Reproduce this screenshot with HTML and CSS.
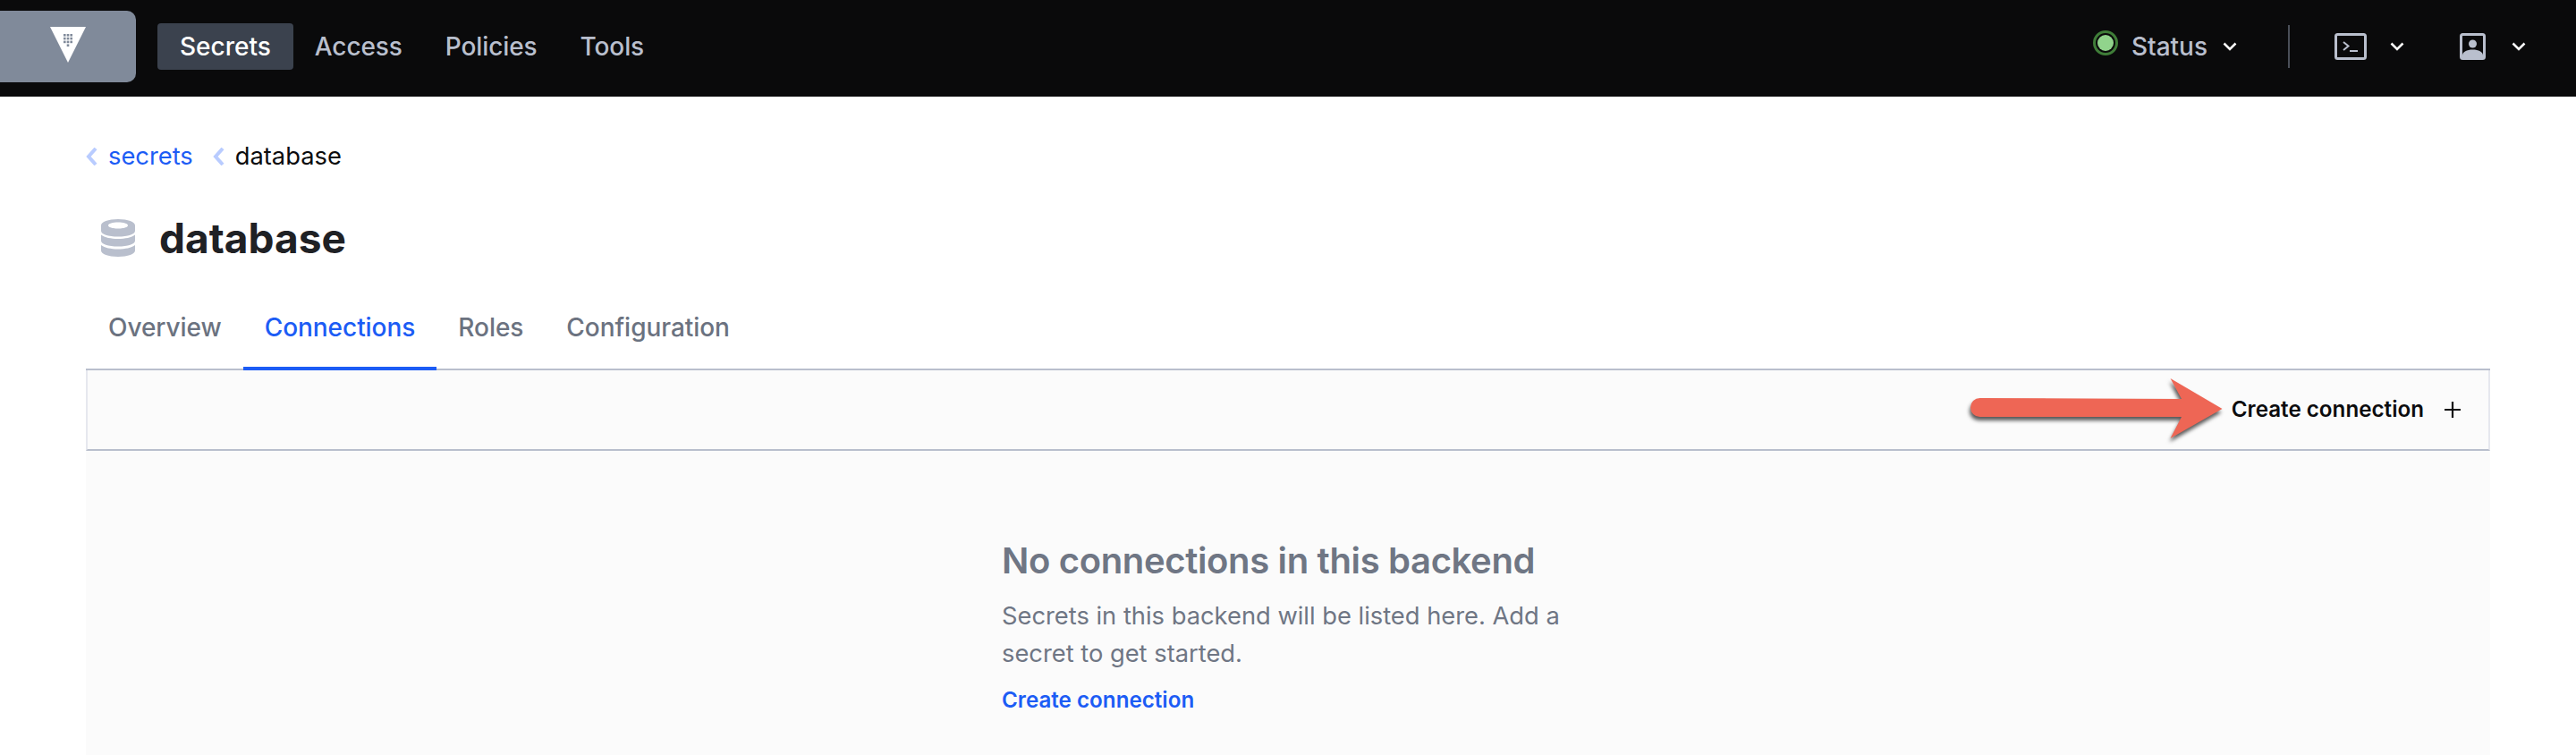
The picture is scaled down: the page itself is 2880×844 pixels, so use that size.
FILE: index.html
```html
<!DOCTYPE html>
<html lang="en">

<head>
  <meta charset="UTF-8" />
  <title>database - Secrets</title>
  <link rel="stylesheet" href="styles.css">
</head>

<body>

  <nav class="topbar">
    <a class="logo" href="#">
      <svg width="40" height="40" viewBox="0 0 40 40">
        <path d="M0 0H40L20 40Z" fill="#fff" />
        <g fill="#808a9a">
          <rect x="15" y="8" width="2.6" height="2.6" />
          <rect x="18.7" y="8" width="2.6" height="2.6" />
          <rect x="22.4" y="8" width="2.6" height="2.6" />
          <rect x="15" y="11.8" width="2.6" height="2.6" />
          <rect x="18.7" y="11.8" width="2.6" height="2.6" />
          <rect x="22.4" y="11.8" width="2.6" height="2.6" />
          <rect x="15" y="15.6" width="2.6" height="2.6" />
          <rect x="18.7" y="15.6" width="2.6" height="2.6" />
          <rect x="22.4" y="15.6" width="2.6" height="2.6" />
          <rect x="18.7" y="19.4" width="2.6" height="2.6" />
        </g>
      </svg>
    </a>

    <div class="nav-links">
      <a class="nav-link active" href="#">Secrets</a>
      <a class="nav-link" href="#">Access</a>
      <a class="nav-link" href="#">Policies</a>
      <a class="nav-link" href="#">Tools</a>
    </div>

    <div class="nav-right">
      <svg class="status-dot" width="28" height="28" viewBox="0 0 28 28">
        <circle cx="14" cy="14" r="12.5" fill="none" stroke="#3f7d38" stroke-width="3" />
        <circle cx="14" cy="14" r="9" fill="#91d48c" />
      </svg>
      <span class="status-label">Status</span>
      <svg class="chevron" width="16" height="10" viewBox="0 0 16 10">
        <path d="M1.5 1.5L8 8L14.500 1.500" />
      </svg>
      <span class="nav-divider"></span>
      <svg class="terminal-icon" width="36" height="30" viewBox="0 0 36 30">
        <rect x="1.500" y="1.500" width="33" height="27" rx="2" fill="none" stroke="#b9bfcd" stroke-width="3" />
        <path d="M10 10L15.500 14.500L10 19M17 20H26" fill="none" stroke="#b9bfcd" stroke-width="2" />
      </svg>
      <svg class="chevron chevron-terminal" width="16" height="10" viewBox="0 0 16 10">
        <path d="M1.5 1.5L8 8L14.500 1.500" />
      </svg>
      <svg class="user-icon" width="29" height="30" viewBox="0 0 29 30">
        <rect x="1.500" y="1.500" width="26" height="27" rx="2" fill="none" stroke="#b9bfcd" stroke-width="3" />
        <circle cx="14.500" cy="12" r="4.500" fill="#b9bfcd" />
        <path d="M3 28V25C3 21 8 18.500 14.500 18.500C21 18.500 26 21 26 25V28Z" fill="#b9bfcd" />
      </svg>
      <svg class="chevron chevron-user" width="16" height="10" viewBox="0 0 16 10">
        <path d="M1.5 1.5L8 8L14.500 1.500" />
      </svg>
    </div>
  </nav>

  <main class="page">
    <div class="breadcrumb">
      <svg class="crumb-sep" width="13" height="20" viewBox="0 0 13 20">
        <path d="M11 1L3 10L11 19" />
      </svg>
      <a class="crumb-link" href="#">secrets</a>
      <svg class="crumb-sep crumb-sep-second" width="13" height="20" viewBox="0 0 13 20">
        <path d="M11 1L3 10L11 19" />
      </svg>
      <span>database</span>
    </div>

    <div class="title-row">
      <svg width="38" height="42" viewBox="0 0 38 42">
        <path fill-rule="evenodd" fill="#b9bfcd" d="M0 7C0 3 8 0 19 0S38 3 38 7V13C38 17 30 19.500 19 19.500S0 17 0 13ZM8 7C8 9 13 10.500 19 10.500S30 9 30 7 25 3.500 19 3.500 8 5 8 7Z" />
        <path fill="#b9bfcd" d="M0 17.500C4 20.500 11 22 19 22S34 20.500 38 17.500V24C38 28 30 30.500 19 30.500S0 28 0 24Z" />
        <path fill="#b9bfcd" d="M0 29C4 32 11 33.500 19 33.500S34 32 38 29V35C38 39 30 42 19 42S0 39 0 35Z" />
      </svg>
      <h1>database</h1>
    </div>

    <div class="tabs">
      <a class="tab" href="#">Overview</a>
      <a class="tab active" href="#">Connections</a>
      <a class="tab" href="#">Roles</a>
      <a class="tab" href="#">Configuration</a>
    </div>

    <div class="toolbar">
      <a class="toolbar-action" href="#">Create connection
        <svg width="20" height="20" viewBox="0 0 20 20">
          <path d="M10 1V19M1 10H19" fill="none" stroke="#0c0c0e" stroke-width="2.200" />
        </svg>
      </a>
      <!-- annotation arrow on top of the screenshot -->
      <svg class="callout-arrow" width="310" height="85" viewBox="0 0 310 85">
        <path d="M23.500 30L249 31L236.500 8L294.500 42L236.500 75L249 51L23.500 51A10.500 10.500 0 0 1 23.500 30Z" fill="#ee6655" />
      </svg>
    </div>

    <section class="empty-state">
      <div class="empty-inner">
        <h2>No connections in this backend</h2>
        <p>Secrets in this backend will be listed here. Add a secret to get started.</p>
        <a class="empty-link" href="#">Create connection</a>
      </div>
    </section>
  </main>

</body>

</html>
```

FILE: styles.css
```css
* {
  margin: 0;
  padding: 0;
  box-sizing: border-box;
}

html,
body {
  height: 844px;
  overflow: hidden;
}

body {
  font-family: Inter, 'Liberation Sans', sans-serif;
  background: #fff;
  color: #0c0c0e;
}

a {
  text-decoration: none;
  color: inherit;
}

/* Top bar */
.topbar {
  display: flex;
  align-items: center;
  height: 108px;
  padding: 0 56px 4px 0;
  background: #0a0a0b;
}

.logo {
  display: flex;
  justify-content: center;
  align-items: center;
  width: 152px;
  height: 80px;
  padding: 1px 0 0 0;
  background: #808a9a;
  border-radius: 0 10px 10px 0;
}

.logo svg {
  margin: 0 0 5px 0;
}

.nav-links {
  display: flex;
  margin-left: 24px;
}

.nav-link {
  padding: 0 24px;
  font-size: 28px;
  font-weight: 500;
  line-height: 52px;
  letter-spacing: -0.1px;
  color: #b9bfcd;
  border-radius: 4px;
}

.nav-link.active {
  padding: 0 25px;
  letter-spacing: 0;
  background: #3b424e;
  color: #fff;
}

.nav-right {
  display: flex;
  align-items: center;
  margin-left: auto;
}

.status-dot {
  margin-bottom: 8px;
}

.status-label {
  margin-left: 15px;
  font-size: 28px;
  font-weight: 500;
  line-height: 52px;
  color: #b9bfcd;
}

.chevron {
  margin-left: 17px;
}

.chevron path {
  fill: none;
  stroke: #fff;
  stroke-width: 2.5;
}

.chevron-terminal {
  margin-left: 26px;
}

.chevron-user {
  margin-left: 29px;
}

.nav-divider {
  width: 2px;
  height: 48px;
  margin: 0 50px 0 57px;
  background: #4a4f58;
}

.user-icon {
  margin-left: 62px;
}

/* Page */
.page {
  padding: 49px 96px 0;
}

.breadcrumb {
  display: flex;
  align-items: center;
  font-size: 27.3px;
  line-height: 36px;
}

.crumb-sep {
  margin-right: 12px;
}

.crumb-sep path {
  fill: none;
  stroke: #b9ccff;
  stroke-width: 4;
}

.crumb-sep-second {
  margin-left: 22px;
}

.crumb-link {
  color: #1c5cf5;
}

.title-row {
  display: flex;
  align-items: center;
  gap: 27px;
  margin-top: 45px;
  padding-left: 17px;
}

h1 {
  font-size: 46px;
  font-weight: 700;
  line-height: 56px;
  color: #1f2125;
}

.tabs {
  display: flex;
  height: 86px;
  margin-top: 34px;
  padding-left: 1px;
  border-bottom: 2px solid #b9bfcd;
}

.tab {
  height: 86px;
  padding: 20px 24px 26px;
  font-size: 28px;
  font-weight: 500;
  line-height: 36px;
  letter-spacing: -0.05px;
  color: #6b7280;
  border-bottom: 4px solid transparent;
}

.tab.active {
  color: #1c5cf5;
  border-bottom-color: #1c5cf5;
}

.toolbar {
  position: relative;
  display: flex;
  justify-content: flex-end;
  align-items: center;
  height: 90px;
  padding-right: 30px;
  background: #fbfbfb;
  border: 2px solid #e6e8ee;
  border-top: 0;
  border-bottom-color: #b9bfcd;
}

.toolbar-action {
  display: flex;
  align-items: center;
  gap: 22px;
  font-size: 24.2px;
  font-weight: 600;
  line-height: 36px;
}

.callout-arrow {
  position: absolute;
  top: 1px;
  right: 282px;
  filter: drop-shadow(-1px 4px 2px rgba(0, 0, 0, 0.65));
}

.empty-state {
  display: flex;
  justify-content: center;
  height: 340px;
  padding-top: 98px;
  background: #fbfbfb;
}

.empty-inner {
  width: 640px;
}

h2 {
  font-size: 40px;
  font-weight: 600;
  line-height: 50px;
  letter-spacing: -0.35px;
  color: #6f7684;
}

.empty-inner p {
  margin-top: 16px;
  font-size: 27.3px;
  line-height: 42px;
  color: #6f7684;
}

.empty-link {
  display: block;
  margin-top: 13px;
  font-size: 24.2px;
  font-weight: 600;
  line-height: 36px;
  color: #1c5cf5;
}
```
